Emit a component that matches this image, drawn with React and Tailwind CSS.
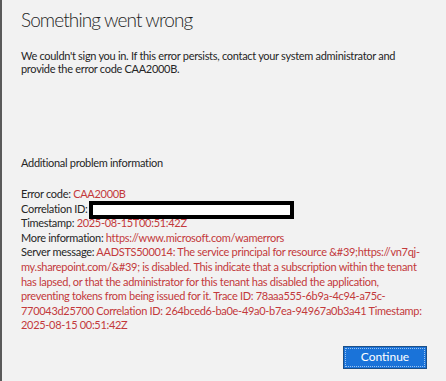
export default function App() {
  const red = 'text-[#c3393b]';
  return (
    <div className="w-[446px] h-[381px] overflow-hidden bg-[#f2f2f2] border-l-2 border-[#5a5a5a] font-['Lato',sans-serif] text-[#262626]">
      <div className="pl-[19px] pr-4 pt-[6px]">
        <h1 className="text-[19px] leading-[28px] font-light tracking-[-0.9px] text-[#1f1f1f]">Something went wrong</h1>
        <div className="text-[11px] tracking-[-0.3px]">
          <p className="mt-[15px] leading-[13px] whitespace-nowrap">
            We couldn't sign you in. If this error persists, contact your system administrator and
            <br />
            provide the error code CAA2000B.
          </p>

          <p className="mt-[80px] leading-[15px]">Additional problem information</p>

          <div className="mt-[17px] leading-[14.6px] whitespace-nowrap">
            <div>Error code: <span className={red}>CAA2000B</span></div>
            <div className="flex items-center h-[14.6px]">
              <span>Correlation ID:</span>
              <span className="ml-[1px] mt-[2px] w-[205px] h-[18px] shrink-0 border-[4px] border-black bg-white"></span>
            </div>
            <div>Timestamp: <span className={red}>2025-08-15T00:51:42Z</span></div>
            <div>More information: <span className={red}>https://www.microsoft.com/wamerrors</span></div>
            <div>Server message: <span className={red}>AADSTS500014: The service principal for resource &amp;#39;https://vn7qj-</span></div>
            <div className={red}>my.sharepoint.com/&amp;#39; is disabled. This indicate that a subscription within the tenant</div>
            <div className={red}>has lapsed, or that the administrator for this tenant has disabled the application,</div>
            <div className={red}>preventing tokens from being issued for it. Trace ID: 78aaa555-6b9a-4c94-a75c-</div>
            <div className={red}>770043d25700 Correlation ID: 264bced6-ba0e-49a0-b7ea-94967a0b3a41 Timestamp:</div>
            <div className={red}>2025-08-15 00:51:42Z</div>
          </div>
        </div>

        <div className="flex justify-end pr-[3px] mt-[13px]">
          <button className="w-[84px] h-[23px] bg-[#1a73d9] border border-[#1d4f86] outline outline-1 outline-dotted outline-offset-[-3px] outline-[#9cc3ee] text-white text-[12px] leading-none">
            Continue
          </button>
        </div>
      </div>
    </div>
  );
}
